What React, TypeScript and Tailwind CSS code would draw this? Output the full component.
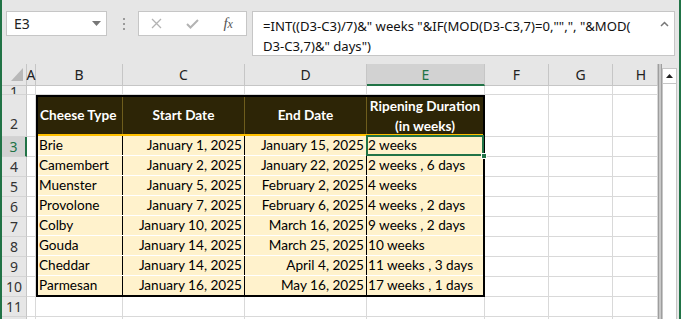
import React from 'react';

const UI_FONT = "font-['Noto_Sans','Open_Sans',sans-serif]";
const CELL_FONT = "font-['Lato','Noto_Sans',sans-serif]";

const columns = ['A', 'B', 'C', 'D', 'E', 'F', 'G', 'H'];

const cheeses = [
  ['Brie', 'January 1, 2025', 'January 15, 2025', '2 weeks'],
  ['Camembert', 'January 2, 2025', 'January 22, 2025', '2 weeks , 6 days'],
  ['Muenster', 'January 5, 2025', 'February 2, 2025', '4 weeks'],
  ['Provolone', 'January 7, 2025', 'February 6, 2025', '4 weeks , 2 days'],
  ['Colby', 'January 10, 2025', 'March 16, 2025', '9 weeks , 2 days'],
  ['Gouda', 'January 14, 2025', 'March 25, 2025', '10 weeks'],
  ['Cheddar', 'January 14, 2025', 'April 4, 2025', '11 weeks , 3 days'],
  ['Parmesan', 'January 16, 2025', 'May 16, 2025', '17 weeks , 1 days'],
];

// sheet rows 1..12, table covers B2:E10
const sheetRows = [1, 2, 3, 4, 5, 6, 7, 8, 9, 10, 11, 12];

function inTable(row: number, col: string) {
  return row >= 2 && row <= 10 && ['B', 'C', 'D', 'E'].includes(col);
}

function FormulaBar() {
  return (
    <div className={`flex h-[64px] shrink-0 items-start pt-[11px] ${UI_FONT}`}>
      {/* name box */}
      <div className="ml-[4px] flex h-[25px] w-[101px] items-center justify-between border border-[#c6c6c6] bg-white pl-[7px] pr-[5px] text-[14px] text-[#222]">
        <span>E3</span>
        <svg width="9" height="5" viewBox="0 0 9 5">
          <polygon points="0,0 9,0 4.5,5" fill="#777" />
        </svg>
      </div>
      {/* grip dots */}
      <div className="ml-[15px] flex h-[25px] w-[3px] flex-col items-center justify-center gap-[3px]">
        <span className="h-[2px] w-[2px] bg-[#9a9a9a]" />
        <span className="h-[2px] w-[2px] bg-[#9a9a9a]" />
        <span className="h-[2px] w-[2px] bg-[#9a9a9a]" />
      </div>
      {/* cancel / enter / fx */}
      <div className="ml-[13px] flex h-[25px] w-[109px] items-center border border-[#c6c6c6] bg-white">
        <div className="flex w-[36px] justify-center">
          <svg width="11" height="11" viewBox="0 0 11 11">
            <path d="M1 1 L10 10 M10 1 L1 10" stroke="#b3b3b3" strokeWidth="1.3" />
          </svg>
        </div>
        <div className="flex w-[36px] justify-center">
          <svg width="13" height="10" viewBox="0 0 13 10">
            <path d="M1 5 L4.5 8.5 L12 1" stroke="#b3b3b3" strokeWidth="2" fill="none" />
          </svg>
        </div>
        <div className="flex w-[36px] justify-center font-['Liberation_Serif',serif] text-[15px] italic text-[#555]">
          <span>f</span>
          <span className="mt-[3px] text-[12px]">x</span>
        </div>
      </div>
      {/* formula */}
      <div className="relative ml-[5px] h-[45px] w-[423px] border border-[#c6c6c6] bg-white pl-[10px] pt-[4px] text-[13.1px] leading-[20px] text-[#111]">
        <div className="whitespace-pre">=INT((D3-C3)/7)&amp;" weeks "&amp;IF(MOD(D3-C3,7)=0,"",", "&amp;MOD(</div>
        <div className="whitespace-pre">D3-C3,7)&amp;" days")</div>
        <svg className="absolute right-[5px] top-[9px]" width="9" height="6" viewBox="0 0 9 6">
          <path d="M1 5 L4.5 1.5 L8 5" stroke="#777" strokeWidth="1.5" fill="none" />
        </svg>
      </div>
    </div>
  );
}

function CheeseTable() {
  return (
    <div className={`col-start-3 col-end-7 row-start-3 row-end-12 flex min-h-0 flex-col border-2 border-black ${CELL_FONT} text-[13.6px] leading-[17px] text-black`}>
      <div className="flex h-[39px] shrink-0 border-b-2 border-[#ffc000] bg-[#2d2506] font-bold text-white">
        <div className="flex w-[85px] items-center border-r border-[#6e5d1c] pl-[2px]">Cheese Type</div>
        <div className="flex w-[122px] items-center justify-center border-r border-[#6e5d1c]">Start Date</div>
        <div className="flex w-[122px] items-center justify-center border-r border-[#6e5d1c]">End Date</div>
        <div className="flex flex-1 flex-col items-center justify-center leading-[20px]">
          <span>Ripening Duration</span>
          <span>(in weeks)</span>
        </div>
      </div>
      {cheeses.map((c, i) => (
        <div
          key={c[0]}
          className={`flex min-h-0 flex-1 bg-[#fff2cc] ${i < cheeses.length - 1 ? 'border-b border-white' : ''}`}
        >
          <div className="flex w-[85px] items-center border-r border-black pl-[1px]">{c[0]}</div>
          <div className="flex w-[122px] items-center justify-end border-r border-black pr-[2px]">{c[1]}</div>
          <div className="flex w-[122px] items-center justify-end border-r border-black pr-[2px]">{c[2]}</div>
          <div className="relative flex flex-1 items-center pl-[1px]">
            {c[3]}
            {i === 0 && (
              <>
                <div className="absolute -left-[1px] -right-[1px] -top-[1px] bottom-[-1px] border-2 border-[#217346]" />
                <div className="absolute -bottom-[4px] -right-[4px] h-[6px] w-[6px] border border-white bg-[#217346]" />
              </>
            )}
          </div>
        </div>
      ))}
    </div>
  );
}

function Sheet() {
  return (
    <div className="flex min-h-0 flex-1">
      <div className="grid w-[656px] shrink-0 grid-cols-[25px_9px_87px_122px_122px_118px_64px_64px_45px] grid-rows-[22px_9px_42px_repeat(10,20px)] overflow-hidden bg-white">
        <CheeseTable />
        {/* corner */}
        <div className="flex items-end justify-end border-b border-r border-[#c6c6c6] bg-[#e6e6e6] pb-[4px] pr-[3px]">
          <svg width="12" height="13" viewBox="0 0 12 13">
            <polygon points="12,0 12,13 0,13" fill="#b8b8b8" />
          </svg>
        </div>
        {columns.map((col) => (
          <div
            key={col}
            className={`flex items-center justify-center border-r border-[#c6c6c6] text-[14px] ${UI_FONT} ${
              col === 'E'
                ? 'border-b-2 border-b-[#217346] bg-[#d2d2d2] text-[#217346]'
                : 'border-b border-b-[#c6c6c6] bg-[#e6e6e6] text-[#222]'
            }`}
          >
            {col === 'H' ? <span className="ml-[12px]">{col}</span> : col}
          </div>
        ))}
        {sheetRows.map((r) => (
          <React.Fragment key={r}>
            <div
              className={`flex justify-center overflow-hidden border-b border-[#d4d4d4] text-[14px] ${UI_FONT} ${
                r === 1 ? 'items-start leading-[14px]' : r === 2 ? 'items-end pb-[2px]' : 'items-center'
              } ${
                r === 3
                  ? 'border-r-2 border-r-[#217346] bg-[#d2d2d2] text-[#217346]'
                  : 'border-r border-r-[#c6c6c6] bg-[#e6e6e6] text-[#333]'
              }`}
            >
              {r < 12 && <span className={r === 1 ? '-mt-[1px]' : ''}>{r}</span>}
            </div>
            {columns
              .filter((col) => !inTable(r, col))
              .map((col) => (
                <div key={col} className="border-b border-r border-[#d9d9d9] bg-white" />
              ))}
          </React.Fragment>
        ))}
      </div>
      {/* vertical scrollbar */}
      <div className="flex w-[21px] shrink-0">
        <div className="w-[4px] border-l border-r border-[#9e9e9e] bg-[#c8c8c8]" />
        <div className="flex w-[15px] flex-col pt-[4px]">
          <div className="flex h-[16px] items-center justify-center border border-[#c6c6c6] bg-white">
            <svg width="7" height="4" viewBox="0 0 7 4">
              <polygon points="0,4 7,4 3.5,0" fill="#222" />
            </svg>
          </div>
          <div className="flex-1 border-x border-[#c6c6c6] bg-white" />
        </div>
        <div className="w-[2px] bg-[#e6e6e6]" />
      </div>
    </div>
  );
}

export default function App() {
  return (
    <div className="flex h-[319px] w-[681px] flex-col overflow-hidden border-x-2 border-[#217346] bg-[#e6e6e6]">
      <FormulaBar />
      <Sheet />
    </div>
  );
}
